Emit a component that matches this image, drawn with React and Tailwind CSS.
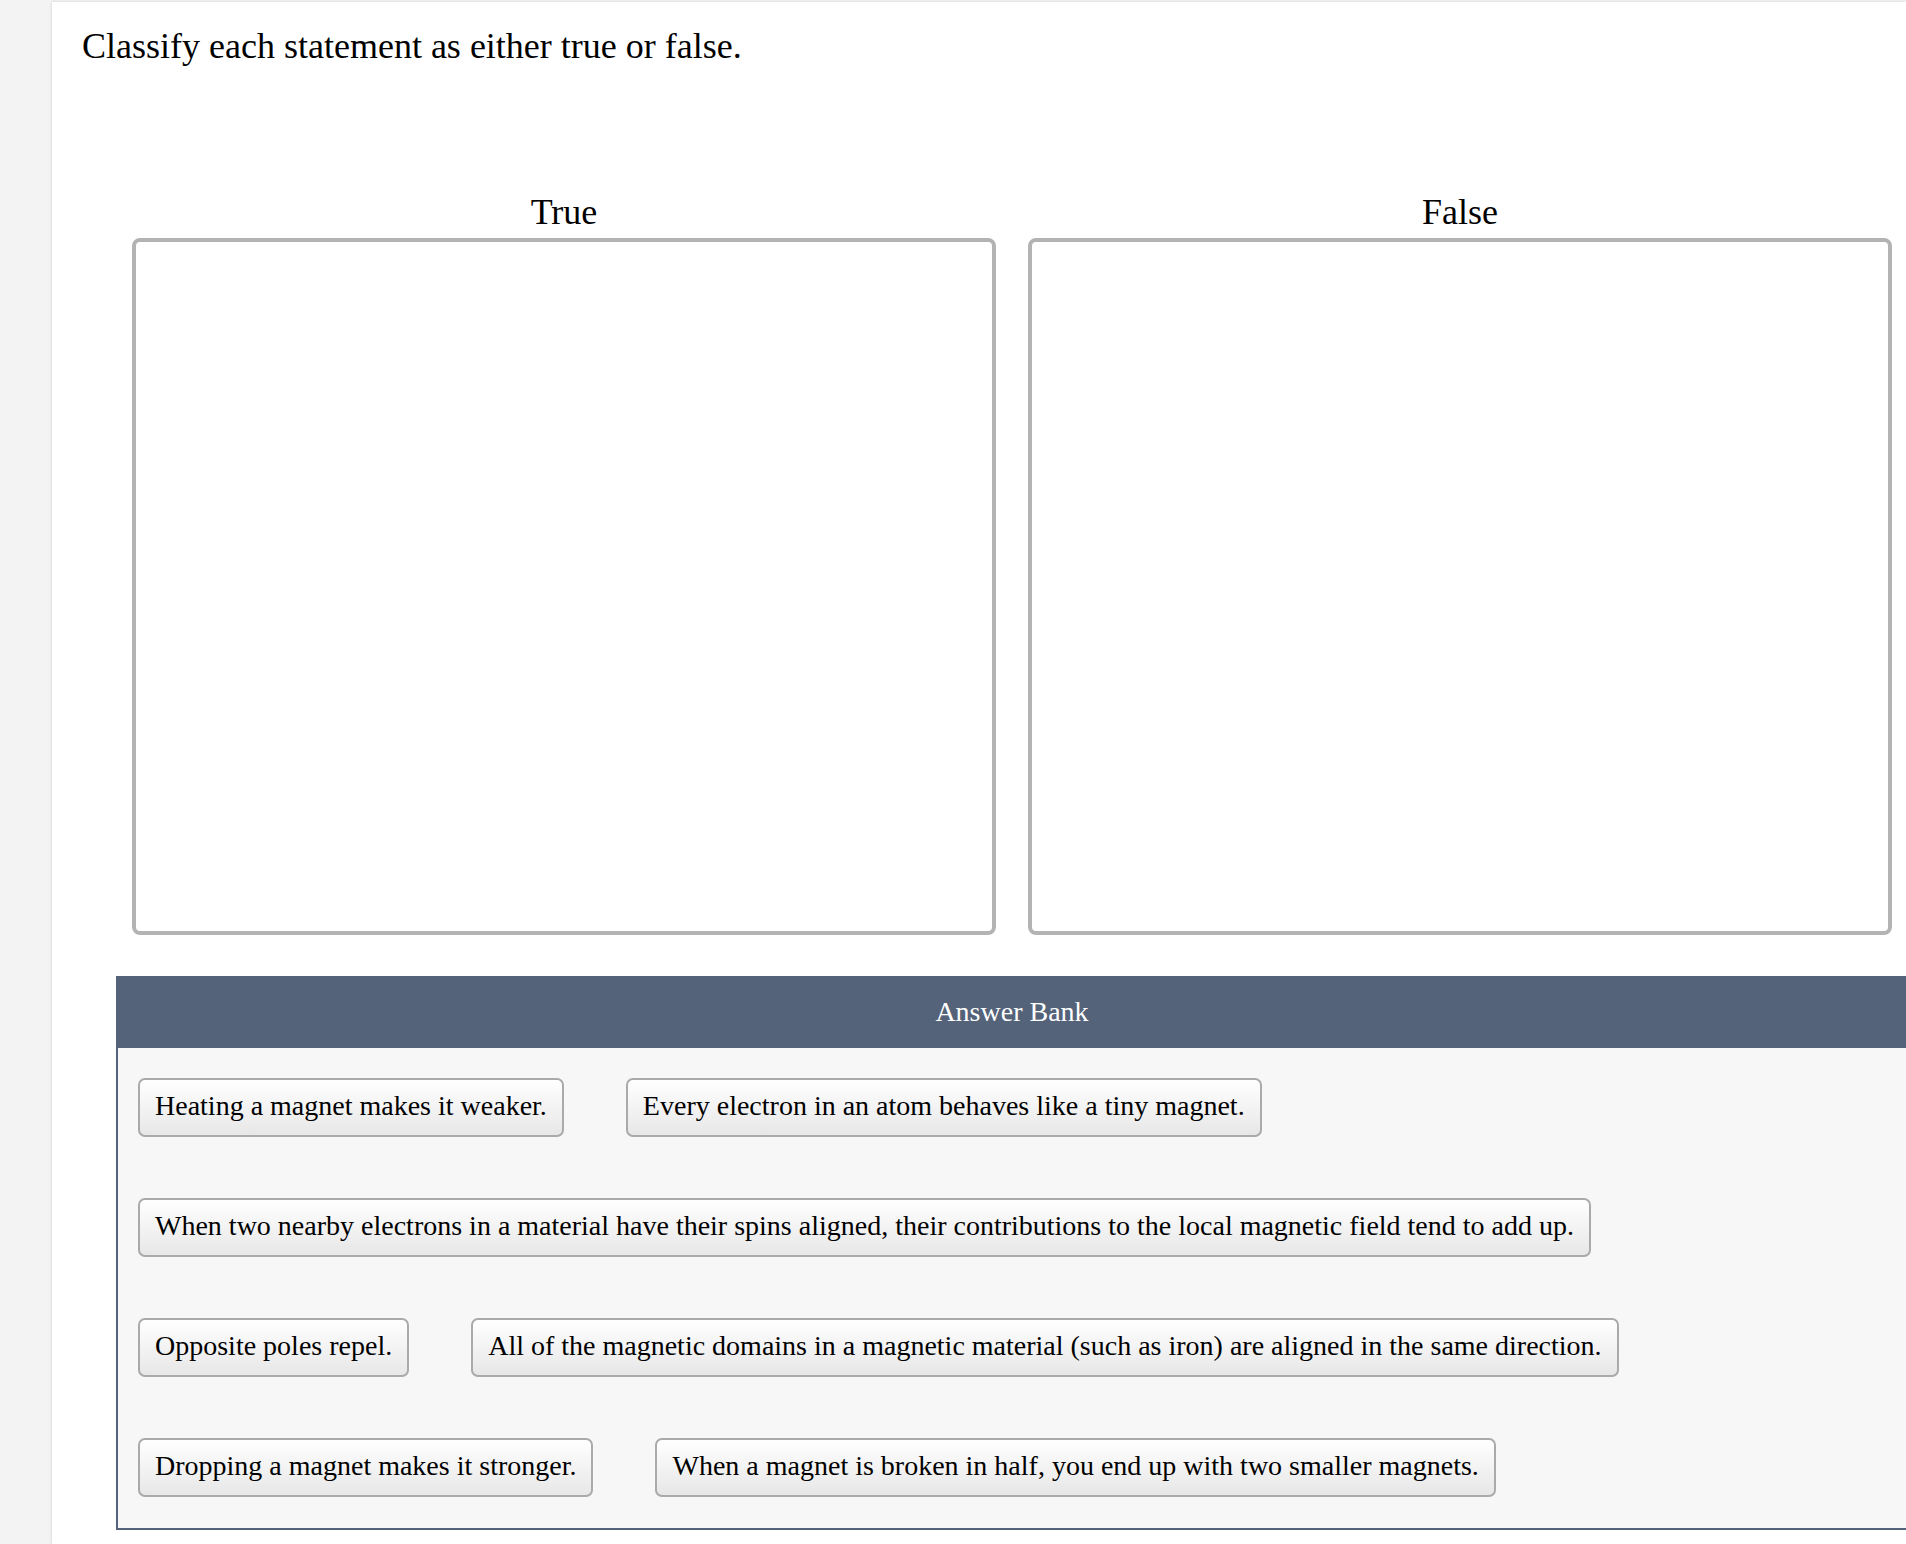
import React from 'react'

const rows = [
  ['Heating a magnet makes it weaker.', 'Every electron in an atom behaves like a tiny magnet.'],
  ['When two nearby electrons in a material have their spins aligned, their contributions to the local magnetic field tend to add up.'],
  ['Opposite poles repel.', 'All of the magnetic domains in a magnetic material (such as iron) are aligned in the same direction.'],
  ['Dropping a magnet makes it stronger.', 'When a magnet is broken in half, you end up with two smaller magnets.'],
]

function Bin({ label }) {
  return (
    <div className="w-[864px] shrink-0">
      <div className="h-[40px] text-center text-[36px] leading-[40px]">{label}</div>
      <div className="mt-[6px] h-[697px] rounded-[8px] border-[4px] border-[#b3b3b3] bg-white" />
    </div>
  )
}

function Chip({ text }) {
  return (
    <div className="flex h-[59px] shrink-0 items-center whitespace-nowrap rounded-[7px] border-2 border-[#aaaaaa] bg-linear-to-b from-white to-[#e7e7e7] px-[15px] pb-[4px] text-[28px] leading-[32px]">
      {text}
    </div>
  )
}

export default function App() {
  return (
    <div className="flex h-[1544px] w-[1906px] overflow-hidden bg-[#f3f3f3] pt-[2px] font-['Liberation_Serif','Times_New_Roman',serif] text-black">
      <div className="ml-[52px] flex-1 overflow-hidden bg-white pl-[30px] pt-[24px] shadow-[0_0_3px_rgba(0,0,0,0.15)]">
        <h1 className="text-[36px] leading-[40px]">Classify each statement as either true or false.</h1>

        {/* Bins */}
        <div className="ml-[50px] mt-[126px] flex gap-[32px]">
          <Bin label="True" />
          <Bin label="False" />
        </div>

        {/* Answer Bank */}
        <div className="ml-[34px] mt-[41px] w-[1792px] shrink-0 border-x-2 border-b-2 border-[#546379]">
          <div className="flex h-[72px] items-center justify-center bg-[#546379] text-[28px] text-white">
            Answer Bank
          </div>
          <div className="flex flex-col gap-[61px] bg-[#f7f7f7] pb-[31px] pl-[20px] pt-[30px]">
            {rows.map((row, i) => (
              <div key={i} className="flex gap-[62px]">
                {row.map(t => (
                  <Chip key={t} text={t} />
                ))}
              </div>
            ))}
          </div>
        </div>
      </div>
    </div>
  )
}
